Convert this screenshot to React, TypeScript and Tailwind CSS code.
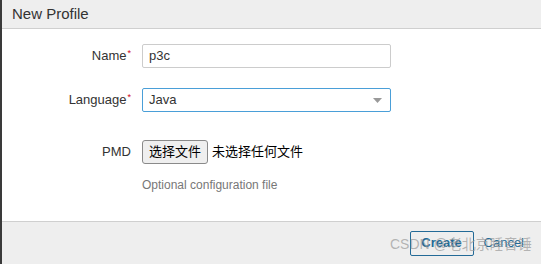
import React from "react";

export default function App() {
  const font = { fontFamily: '"Liberation Sans", Arial, "Noto Sans CJK SC", sans-serif' };
  return (
    <div className="w-[541px] h-[264px] flex overflow-hidden text-[#333]" style={font}>
      <div className="w-[2px] bg-[#3a3a3a] shrink-0" />
      <div className="flex-1 flex flex-col bg-white">
        <div className="h-[29px] bg-[#eeeeee] border-b border-[#cfcfcf] flex items-center pl-[10px] text-[15px] text-[#333]">
          New Profile
        </div>
        <div className="flex-1 pt-[15px]">
          <div className="flex items-center h-[24px]">
            <div className="w-[129px] text-right text-[13px] pr-[0px]">
              Name<span className="text-[#d0021b] text-[9px] relative -top-[4px] ml-[1px]">*</span>
            </div>
            <div className="ml-[11px] w-[249px] h-[24px] border border-[#cccccc] rounded-[2px] flex items-center px-[6px] text-[13px] text-[#333]">
              p3c
            </div>
          </div>
          <div className="flex items-center h-[24px] mt-[20px]">
            <div className="w-[129px] text-right text-[13px]">
              Language<span className="text-[#d0021b] text-[9px] relative -top-[4px] ml-[1px]">*</span>
            </div>
            <div className="ml-[11px] w-[249px] h-[24px] border border-[#4a9fd8] rounded-[2px] flex items-center justify-between pl-[6px] pr-[8px] text-[13px] text-[#333]">
              <span>Java</span>
              <svg width="9" height="5" viewBox="0 0 9 5">
                <path d="M0 0H9L4.5 5Z" fill="#999" />
              </svg>
            </div>
          </div>
          <div className="flex items-center h-[24px] mt-[28px]">
            <div className="w-[129px] text-right text-[13px]">PMD</div>
            <div className="ml-[11px] flex items-center">
              <div className="h-[24px] px-[6px] border border-[#8a8a8a] rounded-[3px] bg-[#efefef] flex items-center text-[13px] text-black">
                选择文件
              </div>
              <span className="ml-[4px] text-[13px] text-black">未选择任何文件</span>
            </div>
          </div>
          <div className="ml-[140px] mt-[12px] text-[12px] text-[#777]">Optional configuration file</div>
        </div>
        <div className="h-[43px] bg-[#eeeeee] border-t border-[#cfcfcf] relative flex items-center justify-end pr-[17px]">
          <div className="h-[25px] w-[64px] border border-[#236a97] rounded-[2px] flex items-center justify-center text-[13px] font-bold text-[#236a97]">
            Create
          </div>
          <div className="ml-[10px] text-[13px] text-[#236a97]">Cancel</div>
          <div className="absolute left-[388px] top-[12px] text-[14px] text-[#999]/70 whitespace-nowrap pointer-events-none" style={font}>
            CSDN @老北京睡音锤
          </div>
        </div>
      </div>
    </div>
  );
}
